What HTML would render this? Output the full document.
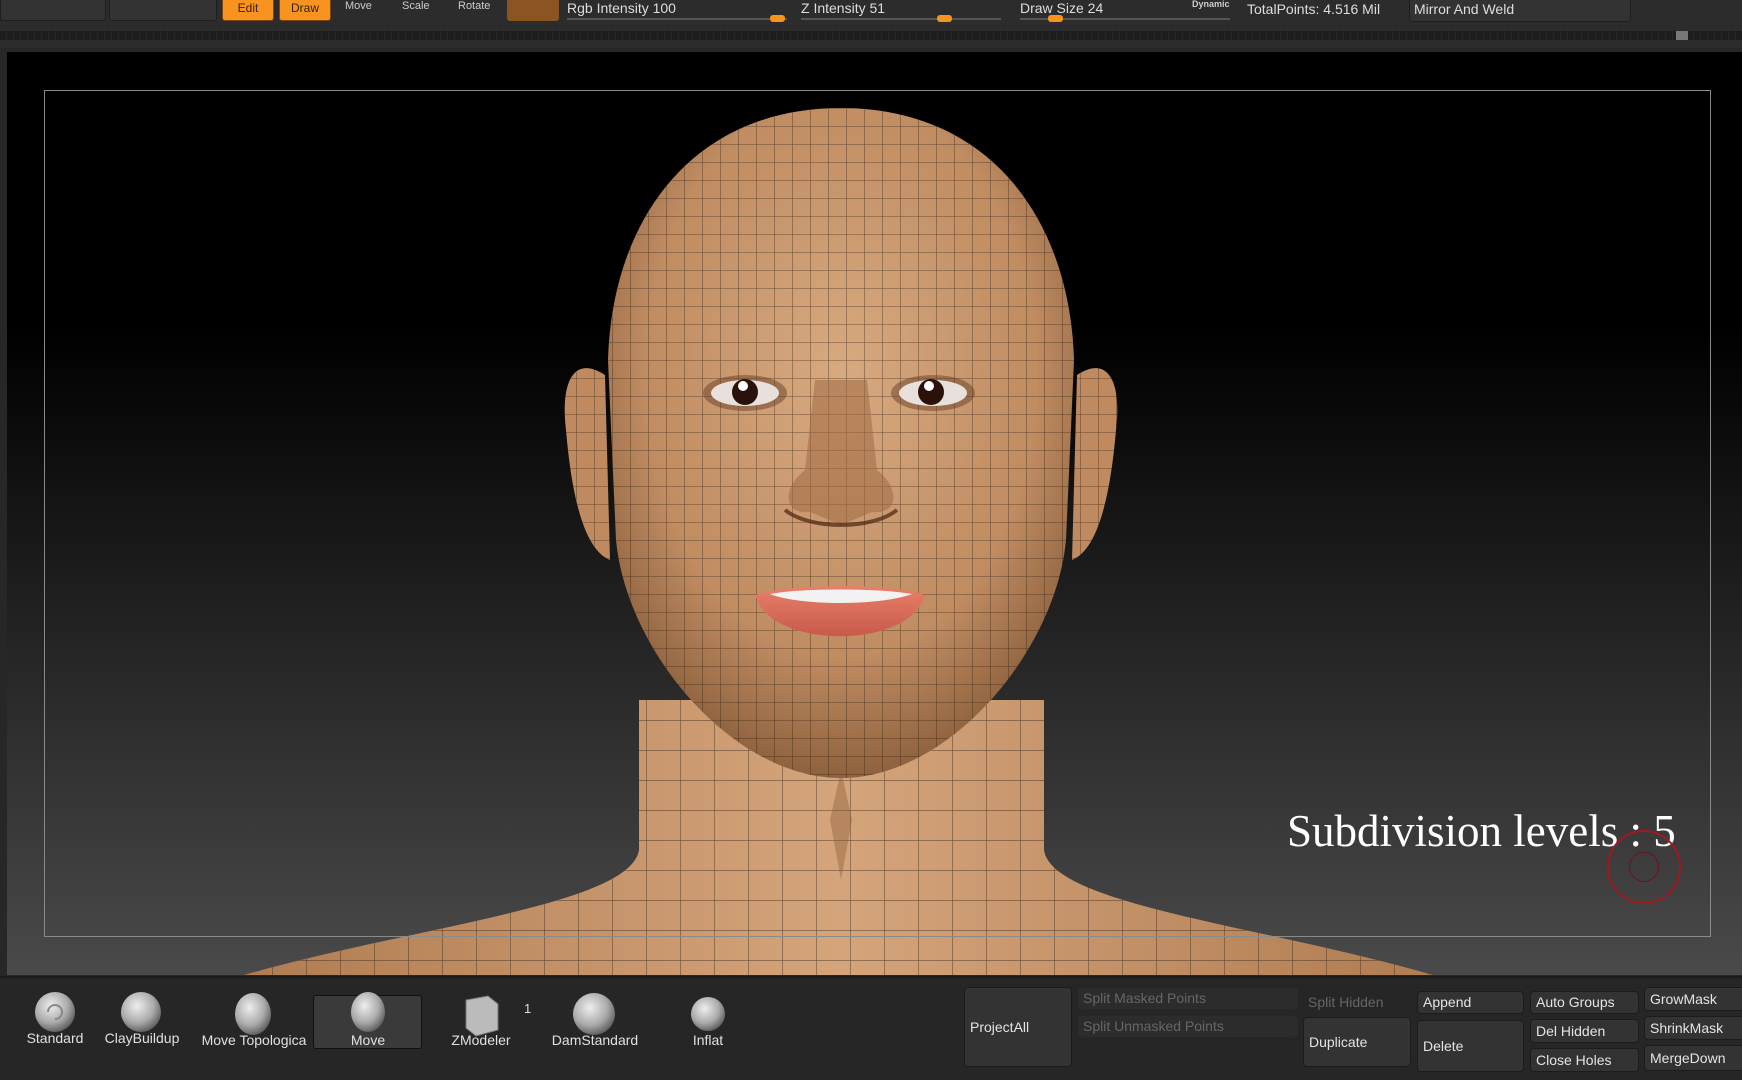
<!DOCTYPE html>
<html><head><meta charset="utf-8"><style>
*{margin:0;padding:0;box-sizing:border-box}
body{width:1742px;height:1080px;background:#272727;overflow:hidden;position:relative;font-family:"Liberation Sans",sans-serif;color:#ddd;font-size:14px}
.a{position:absolute;white-space:nowrap}
.top{position:absolute;left:0;top:0;width:1742px;height:48px;background:#2c2c2c}
.btn{position:absolute;background:#333;border-radius:3px;border:1px solid #1e1e1e}
.or{position:absolute;background:#f7931e;border-radius:3px;color:#3a2200;font-size:12px;text-align:center;line-height:19px;border:1px solid #7a4a10}
.sl{position:absolute;height:2px;background:#555;top:18px}
.hd{position:absolute;width:15px;height:7px;background:#f7931e;border-radius:3px;top:15px}
.bb{position:absolute;background:#333;border-radius:4px;border:1px solid #1c1c1c;color:#e4e4e4;font-size:14px;padding-left:5px}
.dim{color:#666}
.br{position:absolute;text-align:center;font-size:14px;color:#e0e0e0}
</style></head><body>
<div class="top"></div>
<div class="btn" style="left:0;top:-2px;width:106px;height:23px"></div>
<div class="btn" style="left:109px;top:-2px;width:108px;height:23px"></div>
<div class="or" style="left:222px;top:-2px;width:52px;height:23px">Edit</div>
<div class="or" style="left:279px;top:-2px;width:52px;height:23px">Draw</div>
<div class="a" style="left:345px;top:0;font-size:11px;color:#ccc">Move</div>
<div class="a" style="left:402px;top:0;font-size:11px;color:#ccc">Scale</div>
<div class="a" style="left:458px;top:0;font-size:11px;color:#ccc">Rotate</div>
<div class="a" style="left:507px;top:-2px;width:52px;height:23px;background:#8a5520;border-radius:3px"></div>
<div class="a" style="left:567px;top:0;font-size:14px;color:#ddd">Rgb Intensity 100</div>
<div class="sl" style="left:567px;width:220px"></div><div class="hd" style="left:770px"></div>
<div class="a" style="left:801px;top:0">Z Intensity 51</div>
<div class="sl" style="left:801px;width:200px"></div><div class="hd" style="left:937px"></div>
<div class="a" style="left:1020px;top:0">Draw Size 24</div>
<div class="sl" style="left:1020px;width:210px"></div><div class="hd" style="left:1048px"></div>
<div class="a" style="left:1192px;top:-1px;font-size:9px;font-weight:bold;color:#ccc">Dynamic</div>
<div class="a" style="left:1247px;top:1px">TotalPoints: 4.516 Mil</div>
<div class="btn" style="left:1409px;top:-2px;width:222px;height:24px"></div>
<div class="a" style="left:1414px;top:1px">Mirror And Weld</div>
<div class="a" style="left:0;top:31px;width:1742px;height:9px;background:repeating-linear-gradient(90deg,#1d1d1d 0 6px,#262626 6px 7px)"></div>
<div class="a" style="left:1676px;top:31px;width:12px;height:9px;background:#777"></div>
<!-- viewport -->
<div class="a" style="left:7px;top:52px;width:1735px;height:923px;background:linear-gradient(#000 0%,#000 30%,#1e1e1e 58%,#4a4a4a 100%);overflow:hidden">
<svg width="1735" height="923" viewBox="7 52 1735 923" style="position:absolute;left:0;top:0">
<defs>
<pattern id="g" width="18" height="18" patternUnits="userSpaceOnUse"><path d="M0 0H18M0 0V18" stroke="#2a1a0c" stroke-width="1.1" opacity=".6" fill="none"/></pattern>
<pattern id="g2" width="34" height="30" patternUnits="userSpaceOnUse"><path d="M0 0H34M0 0V30" stroke="#2a1a0c" stroke-width="1.2" opacity=".6" fill="none"/></pattern>
<radialGradient id="sk" cx=".5" cy=".4" r=".6"><stop offset="0" stop-color="#d8aa80"/><stop offset=".7" stop-color="#c08c62"/><stop offset="1" stop-color="#8e623e"/></radialGradient>
<linearGradient id="nk" x1="0" x2="1"><stop offset="0" stop-color="#b07c52"/><stop offset=".5" stop-color="#d4a47a"/><stop offset="1" stop-color="#b07c52"/></linearGradient>
<linearGradient id="lp" x1="0" y1="0" x2="0" y2="1"><stop offset="0" stop-color="#e8806a"/><stop offset="1" stop-color="#c85a4a"/></linearGradient>
</defs>
<path d="M639 700 L639 850 C630 905 420 925 244 975 L1433 975 C1260 925 1052 905 1044 850 L1044 700 Z" fill="url(#nk)"/>
<path d="M639 700 L639 850 C630 905 420 925 244 975 L1433 975 C1260 925 1052 905 1044 850 L1044 700 Z" fill="url(#g2)"/>
<path d="M841 880 L830 820 L841 770 L852 820 Z" fill="#8a5a36" opacity=".4"/>
<path d="M605 375 C575 355 560 380 566 430 C572 500 585 550 610 560 Z" fill="#c08a60"/>
<path d="M1077 375 C1107 355 1122 380 1116 430 C1110 500 1097 550 1072 560 Z" fill="#c08a60"/>
<path d="M605 375 C575 355 560 380 566 430 C572 500 585 550 610 560 Z" fill="url(#g)"/>
<path d="M1077 375 C1107 355 1122 380 1116 430 C1110 500 1097 550 1072 560 Z" fill="url(#g)"/>
<path d="M841 108 C990 108 1070 220 1074 360 L1066 540 C1056 650 950 778 841 778 C732 778 626 650 616 540 L608 360 C612 220 692 108 841 108 Z" fill="url(#sk)"/>
<path d="M841 108 C990 108 1070 220 1074 360 L1066 540 C1056 650 950 778 841 778 C732 778 626 650 616 540 L608 360 C612 220 692 108 841 108 Z" fill="url(#g)"/>
<ellipse cx="745" cy="393" rx="42" ry="18" fill="#6a4028" opacity=".5"/>
<ellipse cx="933" cy="393" rx="42" ry="18" fill="#6a4028" opacity=".5"/>
<ellipse cx="745" cy="393" rx="34" ry="13" fill="#e8e0dc"/>
<ellipse cx="933" cy="393" rx="34" ry="13" fill="#e8e0dc"/>
<circle cx="745" cy="392" r="13" fill="#2a120a"/><circle cx="931" cy="392" r="13" fill="#2a120a"/>
<circle cx="743" cy="386" r="5" fill="#fff"/><circle cx="929" cy="386" r="5" fill="#fff"/>
<path d="M815 380 L805 470 C780 490 785 515 810 512 L841 525 L872 512 C897 515 902 490 877 470 L867 380" fill="#a06a44" opacity=".55"/>
<path d="M785 510 C810 530 872 530 897 510" stroke="#4a2410" stroke-width="4" fill="none" opacity=".7"/>
<path d="M755 595 C790 583 890 583 925 595 C910 650 770 650 755 595 Z" fill="url(#lp)"/>
<path d="M770 594 C800 606 880 606 912 594 C880 588 800 588 770 594 Z" fill="#f2f2f2"/>
</svg>
<div style="position:absolute;left:37px;top:38px;width:1667px;height:847px;border:1px solid #8a8a8a"></div>
<div class="a" style="left:1280px;top:753px;font-family:'Liberation Serif',serif;font-size:45px;color:#fff">Subdivision levels : 5</div>
<div class="a" style="left:1600px;top:778px;width:74px;height:74px;border:2px solid #a01820;border-radius:50%"></div>
<div class="a" style="left:1622px;top:800px;width:30px;height:30px;border:1px solid #6a1418;border-radius:50%"></div>
</div>
<!-- bottom -->
<div class="a" style="left:0;top:976px;width:1742px;height:104px;background:#262626;border-top:2px solid #1a1a1a"></div>
<div class="a" style="left:313px;top:995px;width:109px;height:54px;background:#3a3a3a;border:1px solid #111;border-radius:3px"></div>
<svg class="a" style="left:0;top:990px" width="780" height="50">
<defs><radialGradient id="bs" cx=".4" cy=".35" r=".7"><stop offset="0" stop-color="#eee"/><stop offset=".6" stop-color="#aaa"/><stop offset="1" stop-color="#555"/></radialGradient></defs>
<circle cx="55" cy="22" r="20" fill="url(#bs)"/><path d="M48 22 a7 7 0 1 1 7 7" stroke="#888" stroke-width="2" fill="none"/>
<circle cx="141" cy="22" r="20" fill="url(#bs)"/>
<ellipse cx="253" cy="24" rx="18" ry="21" fill="url(#bs)"/>
<ellipse cx="368" cy="22" rx="17" ry="20" fill="url(#bs)"/>
<path d="M466 10 L488 6 L498 14 L498 40 L476 46 L466 38 Z" fill="#bbb" stroke="#777"/>
<circle cx="594" cy="24" r="21" fill="url(#bs)"/>
<circle cx="708" cy="24" r="17" fill="url(#bs)"/>
</svg>
<div class="br" style="left:15px;top:1030px;width:80px">Standard</div>
<div class="br" style="left:97px;top:1030px;width:90px">ClayBuildup</div>
<div class="br" style="left:198px;top:1032px;width:112px;overflow:hidden">Move Topologica</div>
<div class="br" style="left:318px;top:1032px;width:100px">Move</div>
<div class="br" style="left:431px;top:1032px;width:100px">ZModeler</div>
<div class="a" style="left:524px;top:1001px;font-size:13px">1</div>
<div class="br" style="left:540px;top:1032px;width:110px">DamStandard</div>
<div class="br" style="left:658px;top:1032px;width:100px">Inflat</div>
<div class="bb" style="left:964px;top:987px;width:108px;height:80px;line-height:78px">ProjectAll</div>
<div class="bb dim" style="left:1077px;top:987px;width:222px;height:23px;line-height:21px;background:#2c2c2c;border-color:#262626">Split Masked Points</div>
<div class="bb dim" style="left:1077px;top:1015px;width:222px;height:23px;line-height:21px;background:#2c2c2c;border-color:#262626">Split Unmasked Points</div>
<div class="a dim" style="left:1308px;top:994px">Split Hidden</div>
<div class="bb" style="left:1303px;top:1017px;width:108px;height:50px;line-height:48px">Duplicate</div>
<div class="bb" style="left:1417px;top:991px;width:107px;height:23px;line-height:21px">Append</div>
<div class="bb" style="left:1417px;top:1020px;width:107px;height:52px;line-height:50px">Delete</div>
<div class="bb" style="left:1530px;top:991px;width:109px;height:23px;line-height:21px">Auto Groups</div>
<div class="bb" style="left:1530px;top:1019px;width:109px;height:24px;line-height:22px">Del Hidden</div>
<div class="bb" style="left:1530px;top:1048px;width:109px;height:24px;line-height:22px">Close Holes</div>
<div class="bb" style="left:1644px;top:987px;width:104px;height:24px;line-height:22px">GrowMask</div>
<div class="bb" style="left:1644px;top:1016px;width:104px;height:24px;line-height:22px">ShrinkMask</div>
<div class="bb" style="left:1644px;top:1045px;width:104px;height:26px;line-height:24px">MergeDown</div>
</body></html>
